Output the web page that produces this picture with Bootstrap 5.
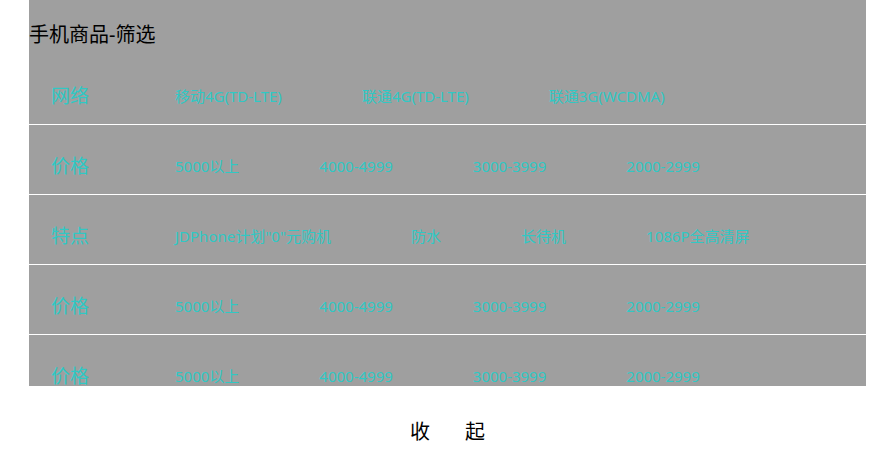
<!DOCTYPE html>
<html lang="zh-CN">
<head>
<meta charset="utf-8">
<meta name="viewport" content="width=device-width, initial-scale=1">
<title>手机商品-筛选</title>
<link href="https://cdn.jsdelivr.net/npm/bootstrap@5.3.0/dist/css/bootstrap.min.css" rel="stylesheet">
<style>
body { font-family: "Noto Sans", "Noto Sans CJK SC", sans-serif; color: #000; background: #fff; }
.page { padding: 0 20px 0 29px; }
.filter-panel { background: #9f9f9f; }
.filter-title { font-size: 20px; line-height: 28px; font-weight: 400; padding: 21px 0 6px; }
.filter-row { padding: 31px 22px 18px; border-bottom: 1px solid #fff; color: #30c8c4; line-height: 20px; }
.filter-row:last-child { padding-bottom: 0; border-bottom: 0; }
.filter-label { width: 124px; font-size: 19px; line-height: 20px; font-weight: 400; }
.filter-options { column-gap: 80px; font-size: 15px; }
.filter-options a { color: inherit; }
.collapse-btn { font-size: 20px; line-height: 28px; gap: 35px; margin-top: 32px; }
</style>
</head>
<body>
<main class="page">
  <section class="filter-panel">
    <h1 class="filter-title m-0">手机商品-筛选</h1>
    <div class="filter-row d-flex align-items-center">
      <h2 class="filter-label flex-shrink-0 m-0">网络</h2>
      <div class="filter-options d-flex flex-wrap">
        <a class="text-decoration-none" href="#">移动4G(TD-LTE)</a>
        <a class="text-decoration-none" href="#">联通4G(TD-LTE)</a>
        <a class="text-decoration-none" href="#">联通3G(WCDMA)</a>
      </div>
    </div>
    <div class="filter-row d-flex align-items-center">
      <h2 class="filter-label flex-shrink-0 m-0">价格</h2>
      <div class="filter-options d-flex flex-wrap">
        <a class="text-decoration-none" href="#">5000以上</a>
        <a class="text-decoration-none" href="#">4000-4999</a>
        <a class="text-decoration-none" href="#">3000-3999</a>
        <a class="text-decoration-none" href="#">2000-2999</a>
      </div>
    </div>
    <div class="filter-row d-flex align-items-center">
      <h2 class="filter-label flex-shrink-0 m-0">特点</h2>
      <div class="filter-options d-flex flex-wrap">
        <a class="text-decoration-none" href="#">JDPhone计划"0"元购机</a>
        <a class="text-decoration-none" href="#">防水</a>
        <a class="text-decoration-none" href="#">长待机</a>
        <a class="text-decoration-none" href="#">1086P全高清屏</a>
      </div>
    </div>
    <div class="filter-row d-flex align-items-center">
      <h2 class="filter-label flex-shrink-0 m-0">价格</h2>
      <div class="filter-options d-flex flex-wrap">
        <a class="text-decoration-none" href="#">5000以上</a>
        <a class="text-decoration-none" href="#">4000-4999</a>
        <a class="text-decoration-none" href="#">3000-3999</a>
        <a class="text-decoration-none" href="#">2000-2999</a>
      </div>
    </div>
    <div class="filter-row d-flex align-items-center">
      <h2 class="filter-label flex-shrink-0 m-0">价格</h2>
      <div class="filter-options d-flex flex-wrap">
        <a class="text-decoration-none" href="#">5000以上</a>
        <a class="text-decoration-none" href="#">4000-4999</a>
        <a class="text-decoration-none" href="#">3000-3999</a>
        <a class="text-decoration-none" href="#">2000-2999</a>
      </div>
    </div>
  </section>
  <button type="button" class="collapse-btn d-flex mx-auto p-0 border-0 bg-transparent text-black"><span>收</span><span>起</span></button>
</main>
<script src="https://cdn.jsdelivr.net/npm/bootstrap@5.3.0/dist/js/bootstrap.bundle.min.js"></script>
</body>
</html>
